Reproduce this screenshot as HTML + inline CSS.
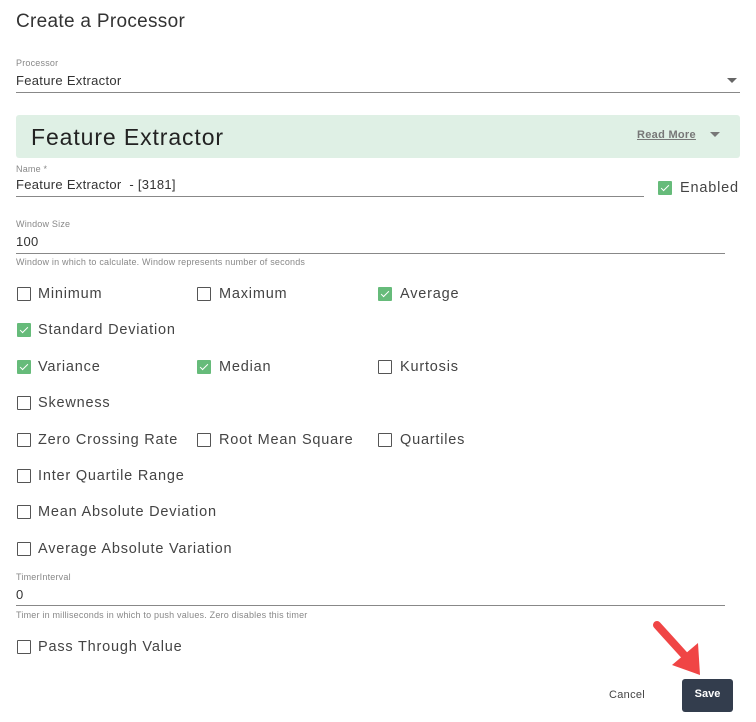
<!DOCTYPE html>
<html><head><style>
body{margin:0;width:756px;height:722px;background:#fff;font-family:"Liberation Sans",sans-serif;color:#333;position:relative;overflow:hidden}
.a{position:absolute;white-space:nowrap}
.lbl{font-size:9px;color:#888;letter-spacing:0.2px}
.val{font-size:13px;color:#333;letter-spacing:0.3px}
.line{position:absolute;height:1px;background:#888}
.cb{position:absolute;width:14px;height:14px;border:1px solid #555;border-radius:1px;box-sizing:border-box}
.cb.on{background:#66bb7a;border-color:#66bb7a}
.cb.on:after{content:"";position:absolute;left:4px;top:1px;width:3px;height:7px;border:solid #fff;border-width:0 1.5px 1.5px 0;transform:rotate(45deg)}
.cl{position:absolute;font-size:14.5px;color:#444;white-space:nowrap;letter-spacing:0.8px}
</style></head><body>
<div class="a" style="left:16px;top:11px;font-size:19px;color:#333;letter-spacing:0.3px">Create a Processor</div>
<div class="a lbl" style="left:16px;top:58px">Processor</div>
<div class="a val" style="left:16px;top:73px">Feature Extractor</div>
<div class="a" style="left:727px;top:78px;width:0;height:0;border-left:5px solid transparent;border-right:5px solid transparent;border-top:5px solid #666"></div>
<div class="line" style="left:16px;top:92px;width:724px"></div>
<div class="a" style="left:16px;top:115px;width:724px;height:43px;background:#dff0e5;border-radius:3px"></div>
<div class="a" style="left:31px;top:124px;font-size:23px;color:#222;letter-spacing:0.9px">Feature Extractor</div>
<div class="a" style="left:637px;top:129px;font-size:11px;color:#777;text-decoration:underline;font-weight:bold;letter-spacing:0.3px">Read More</div>
<div class="a" style="left:710px;top:132px;width:0;height:0;border-left:5px solid transparent;border-right:5px solid transparent;border-top:5px solid #777"></div>
<div class="a lbl" style="left:16px;top:164px">Name *</div>
<div class="a val" style="left:16px;top:177px">Feature Extractor&nbsp; - [3181]</div>
<div class="line" style="left:16px;top:196px;width:628px"></div>
<div class="cb on" style="left:658px;top:181px"></div>
<div class="cl" style="left:680px;top:180px">Enabled</div>
<div class="a lbl" style="left:16px;top:219px">Window Size</div>
<div class="a val" style="left:16px;top:234px">100</div>
<div class="line" style="left:16px;top:253px;width:709px"></div>
<div class="a lbl" style="left:16px;top:257px">Window in which to calculate. Window represents number of seconds</div>

<div class="cb" style="left:17px;top:287px"></div><div class="cl" style="left:38px;top:286px">Minimum</div>
<div class="cb" style="left:197px;top:287px"></div><div class="cl" style="left:219px;top:286px">Maximum</div>
<div class="cb on" style="left:378px;top:287px"></div><div class="cl" style="left:400px;top:286px">Average</div>
<div class="cb on" style="left:17px;top:323px"></div><div class="cl" style="left:38px;top:322px">Standard Deviation</div>
<div class="cb on" style="left:17px;top:360px"></div><div class="cl" style="left:38px;top:359px">Variance</div>
<div class="cb on" style="left:197px;top:360px"></div><div class="cl" style="left:219px;top:359px">Median</div>
<div class="cb" style="left:378px;top:360px"></div><div class="cl" style="left:400px;top:359px">Kurtosis</div>
<div class="cb" style="left:17px;top:396px"></div><div class="cl" style="left:38px;top:395px">Skewness</div>
<div class="cb" style="left:17px;top:433px"></div><div class="cl" style="left:38px;top:432px">Zero Crossing Rate</div>
<div class="cb" style="left:197px;top:433px"></div><div class="cl" style="left:219px;top:432px">Root Mean Square</div>
<div class="cb" style="left:378px;top:433px"></div><div class="cl" style="left:400px;top:432px">Quartiles</div>
<div class="cb" style="left:17px;top:469px"></div><div class="cl" style="left:38px;top:468px">Inter Quartile Range</div>
<div class="cb" style="left:17px;top:505px"></div><div class="cl" style="left:38px;top:504px">Mean Absolute Deviation</div>
<div class="cb" style="left:17px;top:542px"></div><div class="cl" style="left:38px;top:541px">Average Absolute Variation</div>

<div class="a lbl" style="left:16px;top:572px">TimerInterval</div>
<div class="a val" style="left:16px;top:587px">0</div>
<div class="line" style="left:16px;top:605px;width:709px"></div>
<div class="a lbl" style="left:16px;top:610px">Timer in milliseconds in which to push values. Zero disables this timer</div>
<div class="cb" style="left:17px;top:640px"></div><div class="cl" style="left:38px;top:639px">Pass Through Value</div>

<div class="a" style="left:609px;top:689px;font-size:11px;color:#444;letter-spacing:0.3px">Cancel</div>
<div class="a" style="left:682px;top:679px;width:51px;height:33px;background:#333d4d;border-radius:3px;color:#fff;font-size:11px;font-weight:bold;text-align:center;line-height:31px">Save</div>
<svg class="a" style="left:640px;top:615px" width="80" height="70" viewBox="0 0 80 70">
<line x1="17" y1="10" x2="46" y2="42" stroke="#f04545" stroke-width="8" stroke-linecap="round"/>
<polygon points="32,50 58,28 60,60" fill="#f04545"/>
</svg>
</body></html>
